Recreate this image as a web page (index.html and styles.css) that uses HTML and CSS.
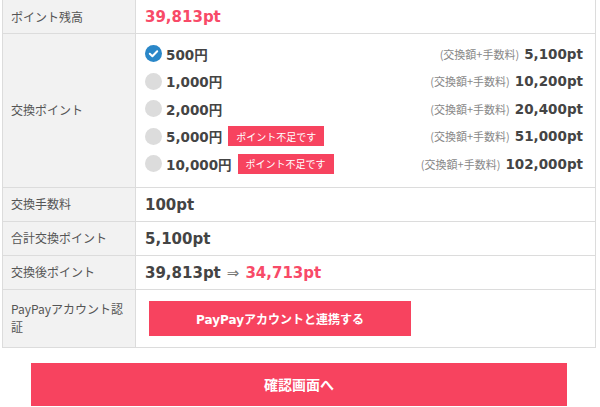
FILE: index.html
```html
<!DOCTYPE html>
<html lang="ja">
<head>
<meta charset="utf-8">
<title>ポイント交換</title>
<link rel="stylesheet" href="styles.css">
</head>
<body>
<div class="page">
  <table class="form">
    <colgroup><col class="col-label"><col></colgroup>
    <tr>
      <th>ポイント残高</th>
      <td><span class="big red">39,813pt</span></td>
    </tr>
    <tr>
      <th>交換ポイント</th>
      <td class="options">
        <div class="opt">
          <span class="radio checked"><svg viewBox="0 0 17 17" width="17" height="17"><circle cx="8.5" cy="8.5" r="8.5" fill="#2a87c8"/><path d="M4.8 8.8 L7.4 11.2 L12.2 6.2" fill="none" stroke="#fff" stroke-width="2" stroke-linecap="round" stroke-linejoin="round"/></svg></span>
          <span class="amt">500円</span>
          <span class="fee">(交換額+手数料)</span><span class="total">5,100pt</span>
        </div>
        <div class="opt">
          <span class="radio"></span>
          <span class="amt">1,000円</span>
          <span class="fee">(交換額+手数料)</span><span class="total">10,200pt</span>
        </div>
        <div class="opt">
          <span class="radio"></span>
          <span class="amt">2,000円</span>
          <span class="fee">(交換額+手数料)</span><span class="total">20,400pt</span>
        </div>
        <div class="opt">
          <span class="radio"></span>
          <span class="amt">5,000円</span>
          <span class="badge">ポイント不足です</span>
          <span class="fee">(交換額+手数料)</span><span class="total">51,000pt</span>
        </div>
        <div class="opt">
          <span class="radio"></span>
          <span class="amt">10,000円</span>
          <span class="badge">ポイント不足です</span>
          <span class="fee">(交換額+手数料)</span><span class="total">102,000pt</span>
        </div>
      </td>
    </tr>
    <tr>
      <th>交換手数料</th>
      <td><span class="big">100pt</span></td>
    </tr>
    <tr>
      <th>合計交換ポイント</th>
      <td><span class="big">5,100pt</span></td>
    </tr>
    <tr>
      <th>交換後ポイント</th>
      <td><span class="big">39,813pt</span><span class="arrow">⇒</span><span class="big red">34,713pt</span></td>
    </tr>
    <tr class="auth">
      <th>PayPayアカウント認証</th>
      <td><button class="paypay" type="button">PayPayアカウントと連携する</button></td>
    </tr>
  </table>
  <div class="submit-wrap">
    <button class="submit" type="button">確認画面へ</button>
  </div>
</div>
</body>
</html>
```

FILE: styles.css
```css
html, body {
  margin: 0;
  padding: 0;
  background: #fff;
}

body {
  font-family: "DejaVu Sans", "Noto Sans CJK JP", sans-serif;
  color: #444;
}

.page {
  padding: 0 4px 0 2px;
}

.form {
  width: 100%;
  border-collapse: collapse;
  table-layout: fixed;
  margin-top: -1px;
}

.col-label {
  width: 133px;
}

.form th,
.form td {
  border: 1px solid #dcdcdc;
  height: 33px;
  vertical-align: middle;
  padding: 0 9px;
}

.form th {
  background: #f2f2f2;
  font-family: "Noto Sans CJK JP", sans-serif;
  font-size: 12px;
  line-height: 18px;
  font-weight: normal;
  color: #555;
  text-align: left;
  padding: 0 8px;
}

.big {
  font-size: 15px;
  font-weight: bold;
  color: #444;
}

.red {
  color: #f84a68;
}

.arrow {
  font-size: 15px;
  color: #777;
  margin: 0 6px;
}

.form td.options {
  padding: 6px 12px 9px 9px;
}

.opt {
  display: flex;
  align-items: center;
  height: 27.5px;
}

.radio {
  width: 17px;
  height: 17px;
  border-radius: 50%;
  background: #dcdcdc;
  flex: none;
}

.radio.checked {
  background: none;
}

.radio svg {
  display: block;
}

.amt {
  margin-left: 4px;
  font-size: 13.5px;
  font-weight: bold;
  color: #444;
}

.badge {
  margin-left: 6px;
  height: 20px;
  padding: 0 8px;
  display: inline-flex;
  align-items: center;
  background: #f7435f;
  color: #fff;
  font-family: "Noto Sans CJK JP", sans-serif;
  font-size: 10px;
}

.fee {
  margin-left: auto;
  font-family: "Noto Sans CJK JP", sans-serif;
  font-size: 11px;
  color: #888;
}

.total {
  margin-left: 5px;
  font-size: 13.5px;
  font-weight: bold;
  color: #444;
}

.auth th,
.auth td {
  height: 57px;
}

.paypay {
  margin-left: 4px;
  width: 262px;
  height: 35px;
  border: none;
  background: #f7435f;
  color: #fff;
  font-family: "DejaVu Sans", "Noto Sans CJK JP", sans-serif;
  font-size: 12px;
  font-weight: bold;
  display: block;
}

.submit-wrap {
  display: flex;
  justify-content: center;
  margin-top: 15px;
}

.submit {
  width: 536px;
  height: 43px;
  border: none;
  background: #f7435f;
  color: #fff;
  font-family: "Noto Sans CJK JP", sans-serif;
  font-size: 14px;
  font-weight: bold;
}
```
